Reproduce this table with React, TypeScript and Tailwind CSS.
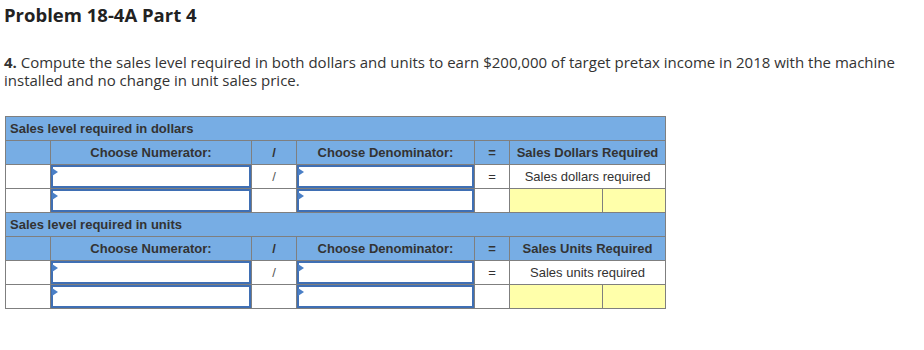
import React from 'react';

const cell = 'border border-[#7f7f7f] p-0 h-[24px]';

function InputCell() {
  return (
    <td className={`${cell} bg-white`}>
      <div className="relative h-[23px] border-2 border-[#3f6fb4] bg-white">
        <span className="absolute left-[-1px] top-[1px] w-0 h-0 border-y-[4px] border-y-transparent border-l-[6px] border-l-[#4a7fc6]" />
      </div>
    </td>
  );
}

function Section({ title, result, label }: { title: string; result: string; label: string }) {
  return (
    <>
      <tr className="bg-[#77ade4]">
        <td colSpan={7} className={`${cell} px-[4px] font-bold text-[13px] text-[#333]`}>
          {title}
        </td>
      </tr>
      <tr className="bg-[#77ade4] font-bold text-[13px] text-[#333]">
        <td className={cell}></td>
        <td className={`${cell} text-center`}>Choose Numerator:</td>
        <td className={`${cell} text-center`}>/</td>
        <td className={`${cell} text-center`}>Choose Denominator:</td>
        <td className={`${cell} text-center`}>=</td>
        <td colSpan={2} className={`${cell} text-center`}>{result}</td>
      </tr>
      <tr className="text-[13px] text-[#333]">
        <td className={`${cell} bg-white`}></td>
        <InputCell />
        <td className={`${cell} bg-white text-center text-[#555]`}>/</td>
        <InputCell />
        <td className={`${cell} bg-white text-center`}>=</td>
        <td colSpan={2} className={`${cell} bg-white text-center`}>{label}</td>
      </tr>
      <tr>
        <td className={`${cell} bg-white`}></td>
        <InputCell />
        <td className={`${cell} bg-white`}></td>
        <InputCell />
        <td className={`${cell} bg-white`}></td>
        <td className={`${cell} bg-[#ffffaa]`}></td>
        <td className={`${cell} bg-[#ffffaa]`}></td>
      </tr>
    </>
  );
}

export default function App() {
  return (
    <div className="w-[924px] h-[350px] bg-white overflow-hidden">
      <h1 className="pl-[4px] pt-[4px] text-[18.5px] leading-[22px] font-bold text-[#222] font-['Open_Sans',sans-serif]">
        Problem 18-4A Part 4
      </h1>
      <p className="pl-[4px] pt-[27px] text-[15px] leading-[18px] text-[#333] font-['Open_Sans',sans-serif]">
        <span className="font-bold">4.</span> Compute the sales level required in both dollars and units to earn $200,000 of target pretax income in 2018 with the machine installed and no change in unit sales price.
      </p>
      <div className="pl-[5px] pt-[27px]">
        <table className="border-collapse border border-[#7f7f7f] table-fixed font-['Liberation_Sans',Arial,sans-serif]" style={{ width: 661 }}>
          <colgroup>
            <col className="w-[45px]" />
            <col className="w-[201px]" />
            <col className="w-[45px]" />
            <col className="w-[178px]" />
            <col className="w-[35px]" />
            <col className="w-[93px]" />
            <col className="w-[63px]" />
          </colgroup>
          <tbody>
            <Section title="Sales level required in dollars" result="Sales Dollars Required" label="Sales dollars required" />
            <Section title="Sales level required in units" result="Sales Units Required" label="Sales units required" />
          </tbody>
        </table>
      </div>
    </div>
  );
}
